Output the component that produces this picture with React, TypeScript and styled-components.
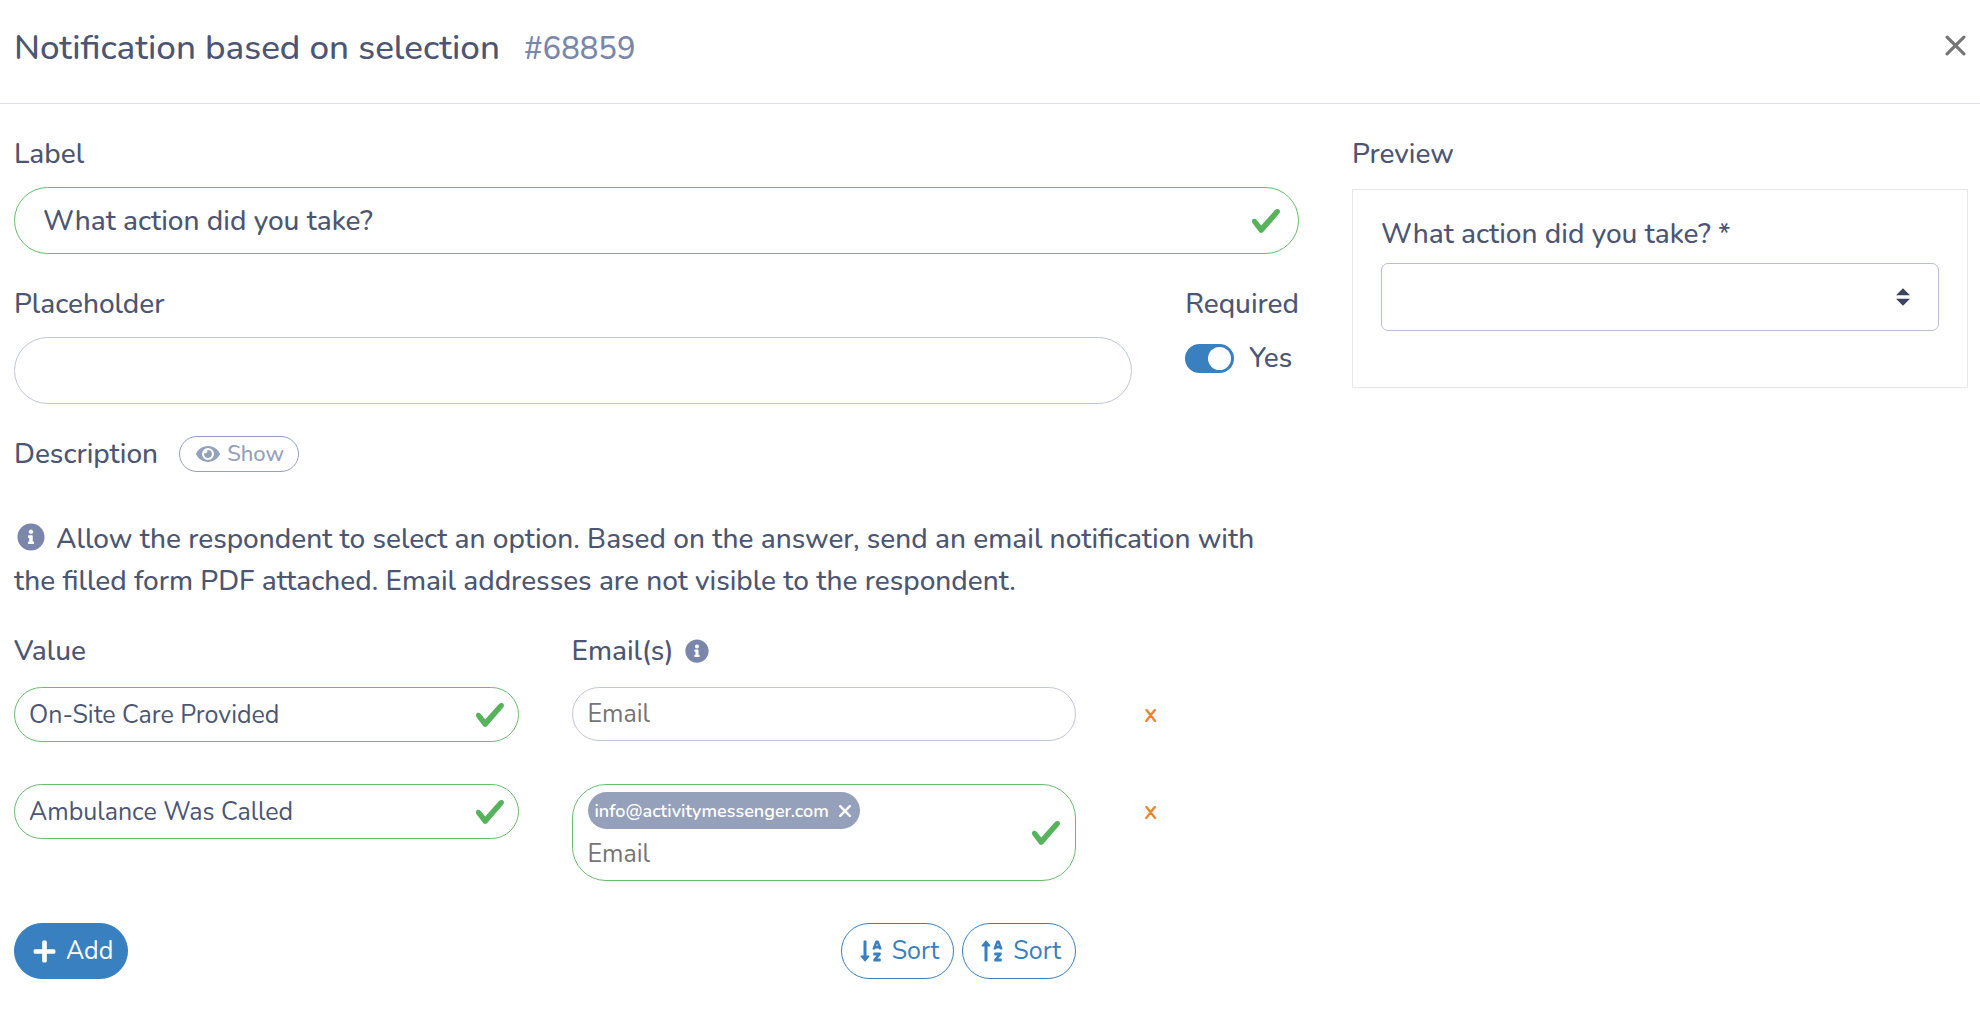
import React, { useState } from "react";
import styled, { createGlobalStyle, css } from "styled-components";
import { FaEye, FaInfoCircle, FaPlus, FaSortAlphaDown, FaSortAlphaUp } from "react-icons/fa";

const color = {
  text: "#4c5673",
  muted: "#7a86aa",
  soft: "#95a0ba",
  border: "#c0c6da",
  line: "#dee0e4",
  blue: "#3880bf",
  green: "#57b35b",
  greenLine: "#68bc6d",
  orange: "#e8842f",
  placeholder: "#757575",
};

const GlobalStyle = createGlobalStyle`
  *, *::before, *::after { box-sizing: border-box; }
  body { margin: 0; background: #fff; }
  body, button, input, select {
    font-family: "Nunito", "Lato", "Open Sans", sans-serif;
    font-weight: 500;
    color: ${color.text};
  }
`;

const Page = styled.div`
  font-size: 28px;
  line-height: 42px;
`;

const Header = styled.header`
  display: flex;
  align-items: flex-start;
  justify-content: space-between;
  padding: 27px 14px 33px;
  border-bottom: 1px solid ${color.line};
`;

const Title = styled.h1`
  display: flex;
  align-items: baseline;
  gap: 24px;
  margin: 0;
  font-size: 35px;
  line-height: 42px;
  font-weight: 500;
`;

const FormId = styled.span`
  font-size: 31px;
  color: ${color.muted};
`;

const CloseButton = styled.button`
  display: flex;
  padding: 8px 0;
  border: 0;
  background: none;
  color: ${color.placeholder};
  cursor: pointer;
`;

const Columns = styled.main`
  display: grid;
  grid-template-columns: repeat(12, minmax(0, 1fr));
  column-gap: 53px;
  padding: 29px 12px 30px 14px;
`;

const Editor = styled.section`
  grid-column: span 8;
`;

const Preview = styled.section`
  grid-column: span 4;
`;

const Field = styled.div`
  margin-bottom: 29px;
`;

const Label = styled.label`
  display: block;
  margin-bottom: 12px;
`;

const Heading = styled.h2`
  margin: 0 0 14px;
  font-size: inherit;
  line-height: inherit;
  font-weight: inherit;
`;

const InputShell = styled.div<{ $valid?: boolean; $compact?: boolean }>`
  display: flex;
  align-items: center;
  height: 67px;
  padding: 0 16px 0 28px;
  border: 1px solid ${(p) => (p.$valid ? color.greenLine : color.border)};
  border-radius: 34px;
  font-size: 28px;
  ${(p) =>
    p.$compact &&
    css`
      height: 55px;
      padding: 0 12px 0 14px;
      border-radius: 28px;
      font-size: 25px;
      input {
        font-weight: 400;
      }
    `}
`;

const TextInput = styled.input`
  flex: 1;
  min-width: 0;
  padding: 0;
  border: 0;
  outline: 0;
  background: none;
  font-size: inherit;
  line-height: 36px;
  &::placeholder {
    color: ${color.placeholder};
    opacity: 1;
  }
`;

const PlaceholderRow = styled.div`
  display: flex;
  gap: 53px;
`;

const GrowField = styled(Field)`
  flex: 1;
`;

const RequiredField = styled(Field)`
  flex: none;
`;

const Switch = styled.label`
  display: flex;
  align-items: center;
  gap: 15px;
`;

const SwitchInput = styled.input`
  display: flex;
  appearance: none;
  width: 49px;
  height: 29px;
  margin: 0;
  padding: 3px;
  border-radius: 15px;
  background: ${color.soft};
  cursor: pointer;
  &::before {
    content: "";
    width: 23px;
    height: 23px;
    border-radius: 50%;
    background: #fff;
  }
  &:checked {
    justify-content: flex-end;
    background: ${color.blue};
  }
`;

const DescriptionRow = styled.div`
  display: flex;
  align-items: center;
  gap: 21px;
  margin-bottom: 43px;
`;

const ShowButton = styled.button`
  display: flex;
  align-items: center;
  gap: 7px;
  height: 36px;
  padding: 0 14px 0 16px;
  border: 1px solid ${color.soft};
  border-radius: 18px;
  background: none;
  color: ${color.soft};
  font-size: 22px;
  cursor: pointer;
`;

const Help = styled.p`
  margin: 0 0 28px;
  svg {
    margin: 0 11px 0 3px;
    vertical-align: -3px;
    color: ${color.muted};
  }
`;

const OptionTable = styled.div`
  display: grid;
  grid-template-columns: repeat(12, minmax(0, 1fr));
  column-gap: 53px;
  row-gap: 42px;
  align-items: start;
`;

const ColumnLabel = styled.div`
  display: flex;
  align-items: center;
  gap: 11px;
  grid-column: span 5;
  margin-bottom: -27px;
  svg {
    color: ${color.muted};
  }
`;

const Spacer = styled.div`
  grid-column: span 2;
`;

const OptionCell = styled.div`
  grid-column: span 5;
`;

const EmailShell = styled.div<{ $valid: boolean }>`
  display: flex;
  align-items: center;
  padding: 7px 13px 7px 15px;
  border: 1px solid ${(p) => (p.$valid ? color.greenLine : color.border)};
  border-radius: ${(p) => (p.$valid ? 34 : 27)}px;
  font-size: 25px;
`;

const EmailBody = styled.div`
  display: flex;
  flex: 1;
  flex-direction: column;
  align-items: flex-start;
  gap: 6px;
  min-width: 0;
  input {
    flex: none;
    width: 100%;
    height: 38px;
    font-weight: 400;
  }
`;

const Chip = styled.span`
  display: flex;
  align-items: center;
  gap: 10px;
  height: 37px;
  padding: 0 9px 0 7px;
  border-radius: 19px;
  background: ${color.soft};
  color: #fff;
  font-size: 18px;
  font-weight: 600;
`;

const ChipRemove = styled.button`
  display: flex;
  padding: 0;
  border: 0;
  background: none;
  color: #fff;
  cursor: pointer;
`;

const RemoveCell = styled.div`
  display: flex;
  align-items: center;
  grid-column: span 2;
  height: 53px;
  padding-left: 15px;
`;

const RemoveButton = styled.button`
  padding: 0;
  border: 0;
  background: none;
  color: ${color.orange};
  font-size: 25px;
  line-height: 32px;
  font-weight: 600;
  cursor: pointer;
`;

const Actions = styled.div`
  display: flex;
  justify-content: space-between;
  grid-column: span 10;
`;

const SortGroup = styled.div`
  display: flex;
  gap: 8px;
`;

const PillButton = styled.button<{ $primary?: boolean }>`
  display: flex;
  align-items: center;
  gap: 9px;
  height: 56px;
  padding: 0 14px 0 17px;
  border: 1px solid ${color.blue};
  border-radius: 28px;
  background: ${(p) => (p.$primary ? color.blue : "#fff")};
  color: ${(p) => (p.$primary ? "#fff" : color.blue)};
  font-size: 25px;
  font-weight: 400;
  cursor: pointer;
`;

const PreviewCard = styled.div`
  padding: 23px 28px 56px;
  border: 1px solid #e6e7ea;
`;

const PreviewLabel = styled.label`
  display: block;
  margin-bottom: 8px;
`;

const SelectWrap = styled.div`
  position: relative;
  svg {
    position: absolute;
    top: 25px;
    right: 29px;
    pointer-events: none;
  }
`;

const Select = styled.select`
  display: block;
  appearance: none;
  width: 100%;
  height: 68px;
  padding: 0 56px 0 20px;
  border: 1px solid #b9bfd6;
  border-radius: 7px;
  background: #fff;
  font-size: 28px;
`;

function Check() {
  return (
    <svg width="32" height="32" viewBox="0 0 8 8" aria-hidden="true">
      <path
        fill={color.green}
        d="M2.3 6.73L.6 4.53c-.4-1.04.46-1.4 1.1-.8l1.1 1.4 3.4-3.8c.6-.63 1.6-.27 1.2.7l-4 4.6c-.43.5-.8.4-1.1.1z"
      />
    </svg>
  );
}

function Cross({ size, width }: { size: number; width: number }) {
  return (
    <svg width={size} height={size} viewBox="0 0 20 20" aria-hidden="true">
      <path d="M2 2l16 16M18 2l-16 16" stroke="currentColor" strokeWidth={width} strokeLinecap="round" />
    </svg>
  );
}

const options = [
  { value: "On-Site Care Provided", emails: [] as string[] },
  { value: "Ambulance Was Called", emails: ["info@activitymessenger.com"] },
];

export default function App() {
  const [label, setLabel] = useState("What action did you take?");
  const [required, setRequired] = useState(true);

  return (
    <Page>
      <GlobalStyle />
      <Header>
        <Title>
          Notification based on selection <FormId>#68859</FormId>
        </Title>
        <CloseButton aria-label="Close">
          <Cross size={21} width={3} />
        </CloseButton>
      </Header>
      <Columns>
        <Editor>
          <Field>
            <Label htmlFor="label">Label</Label>
            <InputShell $valid>
              <TextInput id="label" value={label} onChange={(e) => setLabel(e.target.value)} />
              <Check />
            </InputShell>
          </Field>
          <PlaceholderRow>
            <GrowField>
              <Label htmlFor="placeholder">Placeholder</Label>
              <InputShell>
                <TextInput id="placeholder" />
              </InputShell>
            </GrowField>
            <RequiredField>
              <Label htmlFor="required">Required</Label>
              <Switch>
                <SwitchInput
                  id="required"
                  type="checkbox"
                  checked={required}
                  onChange={(e) => setRequired(e.target.checked)}
                />
                {required ? "Yes" : "No"}
              </Switch>
            </RequiredField>
          </PlaceholderRow>
          <DescriptionRow>
            <span>Description</span>
            <ShowButton>
              <FaEye size={24} />
              Show
            </ShowButton>
          </DescriptionRow>
          <Help>
            <FaInfoCircle size={28} />
            Allow the respondent to select an option. Based on the answer, send an email notification with the filled
            form PDF attached. Email addresses are not visible to the respondent.
          </Help>
          <OptionTable>
            <ColumnLabel>Value</ColumnLabel>
            <ColumnLabel>
              Email(s) <FaInfoCircle size={24} />
            </ColumnLabel>
            <Spacer />
            {options.map((option) => (
              <React.Fragment key={option.value}>
                <OptionCell>
                  <InputShell $valid $compact>
                    <TextInput aria-label="Value" defaultValue={option.value} />
                    <Check />
                  </InputShell>
                </OptionCell>
                <OptionCell>
                  <EmailShell $valid={option.emails.length > 0}>
                    <EmailBody>
                      {option.emails.map((email) => (
                        <Chip key={email}>
                          {email}
                          <ChipRemove aria-label={`Remove ${email}`}>
                            <Cross size={12} width={4} />
                          </ChipRemove>
                        </Chip>
                      ))}
                      <TextInput aria-label="Email" placeholder="Email" />
                    </EmailBody>
                    {option.emails.length > 0 && <Check />}
                  </EmailShell>
                </OptionCell>
                <RemoveCell>
                  <RemoveButton>x</RemoveButton>
                </RemoveCell>
              </React.Fragment>
            ))}
            <Actions>
              <PillButton $primary>
                <FaPlus size={25} />
                Add
              </PillButton>
              <SortGroup>
                <PillButton>
                  <FaSortAlphaDown size={24} />
                  Sort
                </PillButton>
                <PillButton>
                  <FaSortAlphaUp size={24} />
                  Sort
                </PillButton>
              </SortGroup>
            </Actions>
          </OptionTable>
        </Editor>
        <Preview>
          <Heading>Preview</Heading>
          <PreviewCard>
            <PreviewLabel htmlFor="preview">What action did you take? *</PreviewLabel>
            <SelectWrap>
              <Select id="preview" />
              <svg width="14" height="18" viewBox="0 0 4 5" aria-hidden="true">
                <path fill="#3c4560" d="M2 0L0 2h4zm0 5L0 3h4z" />
              </svg>
            </SelectWrap>
          </PreviewCard>
        </Preview>
      </Columns>
    </Page>
  );
}
